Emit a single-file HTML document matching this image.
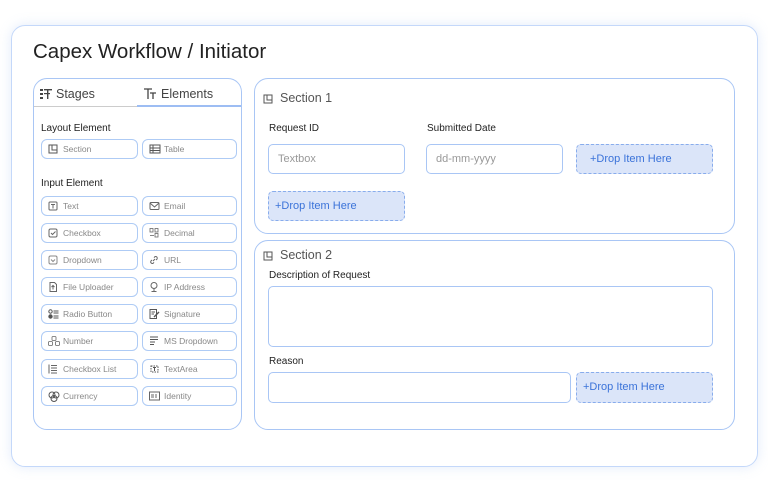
<!DOCTYPE html>
<html><head><meta charset="utf-8"><style>
*{box-sizing:border-box;margin:0;padding:0}
body{width:768px;height:491px;background:#fff;font-family:"Liberation Sans",sans-serif;position:relative;overflow:hidden}
.a{position:absolute}
.card{left:11px;top:25px;width:747px;height:442px;border:1.5px solid #c4d8fa;border-radius:14px;box-shadow:0 0 12px rgba(160,190,240,.3)}
.title{left:33px;top:40px;font-size:20.5px;color:#222}
.panel{border:1px solid #a9c6f5;border-radius:14px}
.item{position:absolute;height:20px;border:1px solid #aecbf5;border-radius:6px;font-size:8.5px;color:#888;padding-left:21px;line-height:18px}
.item svg{position:absolute;left:6px;top:4px}
.lbl{font-size:10px;color:#222;position:absolute}
.inp{position:absolute;border:1px solid #a9c6f5;border-radius:5px;font-size:11px;color:#999;padding-left:9px}
.drop{position:absolute;border:1px dashed #88acec;background:#dbe5f9;border-radius:5px;font-size:11px;color:#3b73d9;padding-left:13px}
.sh{font-size:12.5px;color:#555;position:absolute}
</style></head><body>
<div class="a card"></div>
<div class="a title">Capex Workflow / Initiator</div>

<div class="a panel" style="left:33px;top:78px;width:209px;height:352px"></div>
<div class="a" style="left:34px;top:106px;width:103px;height:1px;background:#ccc"></div>
<div class="a" style="left:137px;top:105px;width:104px;height:1.5px;background:#9dbdf3"></div>
<svg class="a" style="left:40px;top:88px" width="12" height="12" viewBox="0 0 12 12" fill="#444"><rect x="0" y="1" width="3" height="2"/><rect x="0" y="5" width="3" height="2"/><rect x="0" y="9" width="3" height="2"/><rect x="4" y="1" width="8" height="1.4"/><rect x="7" y="1" width="1.4" height="10"/><rect x="4" y="5" width="6" height="1.2"/></svg>
<div class="a" style="left:56px;top:87px;font-size:12.5px;color:#444">Stages</div>
<svg class="a" style="left:143px;top:88px" width="14" height="12" viewBox="0 0 14 12" fill="none" stroke="#444" stroke-width="1.3"><path d="M1 1H9M5 1V11M7 5H13M10 5V11"/></svg>
<div class="a" style="left:161px;top:87px;font-size:12.5px;color:#444">Elements</div>

<div class="lbl" style="left:41px;top:123px">Layout Element</div>
<div class="lbl" style="left:41px;top:178px">Input Element</div>

<div class="item" style="left:41px;top:139px;width:97px"><svg width="10" height="10"><rect x="1" y="1" width="8" height="8" fill="none" stroke="#555"/><path d="M4 1V6H9" fill="none" stroke="#555"/></svg>Section</div>
<div class="item" style="left:142px;top:139px;width:95px"><svg width="12" height="10"><rect x="1" y="1" width="10" height="8" fill="none" stroke="#555"/><path d="M1 4H11M1 6.5H11M4 1V9" stroke="#555"/></svg>Table</div>

<div class="item" style="left:41px;top:196px;width:97px"><svg width="10" height="10"><rect x="1" y="1" width="8" height="8" rx="1" fill="none" stroke="#666"/><path d="M3 3.5H7M5 3.5V7.5" stroke="#666"/></svg>Text</div>
<div class="item" style="left:142px;top:196px;width:95px"><svg width="11" height="10"><rect x="1" y="1.5" width="9" height="7" rx="1" fill="none" stroke="#666"/><path d="M1 2L5.5 6L10 2" fill="none" stroke="#666"/></svg>Email</div>
<div class="item" style="left:41px;top:223px;width:97px"><svg width="10" height="10"><rect x="1" y="1" width="8" height="8" rx="1.5" fill="none" stroke="#666"/><path d="M3 5L4.5 6.5L7.5 3.5" fill="none" stroke="#666"/></svg>Checkbox</div>
<div class="item" style="left:142px;top:223px;width:95px"><svg width="10" height="10" fill="none" stroke="#666" stroke-width=".8"><rect x="1" y="0.5" width="3" height="3.5"/><rect x="6" y="0.5" width="3" height="3.5"/><rect x="6" y="5.5" width="3" height="3.5"/><path d="M1 7.5H5"/></svg>Decimal</div>
<div class="item" style="left:41px;top:250px;width:97px"><svg width="10" height="10"><rect x="1" y="1" width="8" height="8" rx="1.5" fill="none" stroke="#888"/><path d="M3 4.5L5 6.5L7 4.5" fill="none" stroke="#888"/></svg>Dropdown</div>
<div class="item" style="left:142px;top:250px;width:95px"><svg width="10" height="10" fill="none" stroke="#666"><path d="M4 6L6 4M3 5L1.8 6.2A1.7 1.7 0 0 0 4 8.4L5 7.3M7 5L8.2 3.8A1.7 1.7 0 0 0 6 1.6L5 2.7"/></svg>URL</div>
<div class="item" style="left:41px;top:277px;width:97px"><svg width="10" height="10" fill="none" stroke="#666"><path d="M2 0.5H6.5L8.5 2.5V9.5H2Z"/><path d="M5 3.5V7.5M3.5 5L5 3.5L6.5 5"/></svg>File Uploader</div>
<div class="item" style="left:142px;top:277px;width:95px"><svg width="10" height="10" fill="none" stroke="#666"><circle cx="5" cy="3.5" r="3"/><path d="M5 6.5V9.5M2.5 9.5H7.5"/></svg>IP Address</div>
<div class="item" style="left:41px;top:304px;width:97px"><svg width="11" height="10" fill="none" stroke="#555"><circle cx="2.5" cy="2.5" r="1.7"/><circle cx="2.5" cy="7.5" r="1.7" fill="#555"/><path d="M5.5 2H10.5M5.5 4H10.5M5.5 7H10.5M5.5 9H10.5"/></svg>Radio Button</div>
<div class="item" style="left:142px;top:304px;width:95px"><svg width="11" height="10" fill="none" stroke="#555"><path d="M1 0.5H7.5V9.5H1Z M2.5 3H6M2.5 5H5"/><path d="M5 8L10 3" stroke-width="1.4"/></svg>Signature</div>
<div class="item" style="left:41px;top:331px;width:97px"><svg width="12" height="10" fill="none" stroke="#666" stroke-width=".8"><rect x="4" y="0.5" width="4" height="4" rx="1"/><rect x="0.5" y="5.5" width="4" height="4" rx="1"/><rect x="7.5" y="5.5" width="4" height="4" rx="1"/></svg>Number</div>
<div class="item" style="left:142px;top:331px;width:95px"><svg width="10" height="10" fill="none" stroke="#555"><path d="M1 1H9M1 3.5H9M1 6H6M1 8.5H5"/></svg>MS Dropdown</div>
<div class="item" style="left:41px;top:359px;width:97px"><svg width="10" height="10" fill="none" stroke="#666"><path d="M1 0.5V9.5M3 1.5H9M3 4H9M3 6.5H9M3 9H9"/></svg>Checkbox List</div>
<div class="item" style="left:142px;top:359px;width:95px"><svg width="11" height="10" fill="none" stroke="#555"><rect x="2" y="2" width="7" height="6" stroke-dasharray="1.5 1"/><path d="M4 3.5H7M5.5 3.5V7"/></svg>TextArea</div>
<div class="item" style="left:41px;top:386px;width:97px"><svg width="12" height="11" fill="none" stroke="#555"><circle cx="4" cy="4" r="3"/><circle cx="8" cy="4" r="3"/><circle cx="6" cy="7.5" r="3"/></svg>Currency</div>
<div class="item" style="left:142px;top:386px;width:95px"><svg width="11" height="10" fill="none" stroke="#666"><rect x="0.5" y="1" width="10" height="8"/><path d="M2 4H5M2 6H5M7 3V7"/></svg>Identity</div>

<div class="a panel" style="left:254px;top:78px;width:481px;height:156px"></div>
<svg class="a" style="left:263px;top:94px" width="10" height="10"><rect x="1" y="1" width="8" height="8" fill="none" stroke="#555"/><path d="M4 1V6H9" fill="none" stroke="#555"/></svg>
<div class="sh" style="left:280px;top:91px">Section 1</div>
<div class="lbl" style="left:269px;top:123px">Request ID</div>
<div class="lbl" style="left:427px;top:123px">Submitted Date</div>
<div class="inp" style="left:268px;top:144px;width:137px;height:30px;line-height:28px">Textbox</div>
<div class="inp" style="left:426px;top:144px;width:137px;height:30px;line-height:28px">dd-mm-yyyy</div>
<div class="drop" style="left:576px;top:144px;width:137px;height:30px;line-height:28px">+Drop Item Here</div>
<div class="drop" style="left:268px;top:191px;width:137px;height:30px;line-height:28px;padding-left:6px">+Drop Item Here</div>

<div class="a panel" style="left:254px;top:240px;width:481px;height:190px"></div>
<svg class="a" style="left:263px;top:251px" width="10" height="10"><rect x="1" y="1" width="8" height="8" fill="none" stroke="#555"/><path d="M4 1V6H9" fill="none" stroke="#555"/></svg>
<div class="sh" style="left:280px;top:248px">Section 2</div>
<div class="lbl" style="left:269px;top:270px">Description of Request</div>
<div class="inp" style="left:268px;top:286px;width:445px;height:61px"></div>
<div class="lbl" style="left:269px;top:356px">Reason</div>
<div class="inp" style="left:268px;top:372px;width:303px;height:31px"></div>
<div class="drop" style="left:576px;top:372px;width:137px;height:31px;line-height:29px;padding-left:6px">+Drop Item Here</div>
</body></html>
